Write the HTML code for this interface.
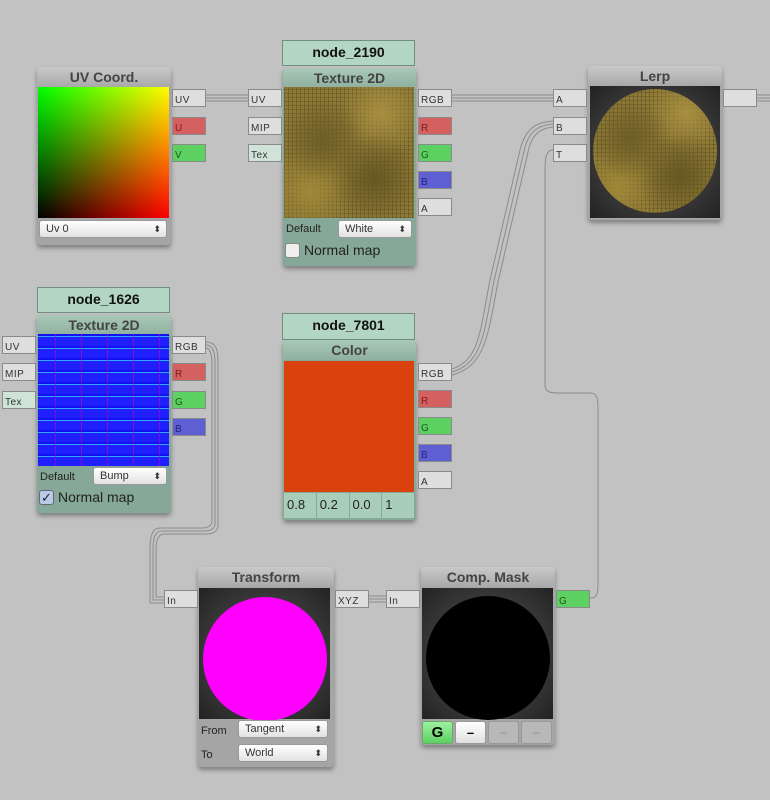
<!DOCTYPE html>
<html><head><meta charset="utf-8"><style>
*{margin:0;padding:0;box-sizing:border-box}
body{width:770px;height:800px;background:#c2c2c2;position:relative;overflow:hidden;font-family:"Liberation Sans",sans-serif}
.a{position:absolute}
.slot{position:absolute;width:34px;height:18px;border:1px solid #8a8a8a;background:#dedede;font-size:10px;color:#333;padding:5px 0 0 2px;line-height:11px;letter-spacing:0.5px}
.r{background:#d46060;color:#7a1d1d}.g{background:#5dd062;color:#1d5a1d}.b{background:#5f5fd4;color:#22227a}.t{background:#cfe3d8}
.node{position:absolute;border-radius:4px;box-shadow:0 3px 5px rgba(0,0,0,.35)}
.gray{background:#a5a5a5}.teal{background:#85a898}
.hdr{height:20px;text-align:center;font-size:14px;color:#444;font-weight:bold;line-height:20px;border-radius:4px 4px 0 0}
.gray .hdr{background:linear-gradient(#c9c9c9,#a9a9a9)}
.teal .hdr{background:linear-gradient(#a9c8b8,#8fb0a0)}
.lbl{position:absolute;background:#b3d6c4;border:1px solid #6f8f80;text-align:center;font-weight:bold;font-size:14px;color:#111;line-height:23px}
.dd{position:absolute;background:linear-gradient(#fff,#e2e2e2);border:1px solid #999;border-radius:3px;font-size:11px;color:#333;padding-left:6px;line-height:16px}
.dd:after{content:"⬍";position:absolute;right:5px;top:0;font-size:9px}
.sm{position:absolute;font-size:11px;color:#222}
.dark{background:radial-gradient(circle,#555 0%,#333 70%,#222 100%)}
.tex{background:radial-gradient(circle at 30% 40%,#6e5e26,transparent 35%),radial-gradient(circle at 70% 70%,#665622,transparent 35%),radial-gradient(circle at 75% 20%,#a88e40,transparent 30%),radial-gradient(circle at 20% 80%,#a08838,transparent 30%),repeating-linear-gradient(90deg,rgba(0,0,0,.18) 0 1px,transparent 1px 4px),repeating-linear-gradient(0deg,rgba(0,0,0,.15) 0 1px,transparent 1px 4px),#8e7a36}
</style></head><body>
<svg class="a" style="left:0;top:0" width="770" height="800" fill="none" stroke="#8c8c8c" stroke-width="1">
<g><path d="M206 95 H248"/><path d="M206 98 H248"/><path d="M206 101 H248"/></g>
<g><path d="M452 95 H553"/><path d="M452 98 H553"/><path d="M452 101 H553"/></g>
<g><path d="M757 95 H770"/><path d="M757 98 H770"/><path d="M757 101 H770"/></g>
<g><path d="M369 596 H386"/><path d="M369 599 H386"/><path d="M369 602 H386"/></g>
<g><path d="M452 369 C480 360 480 330 490 280 L520 150 C526 125 540 122 553 121"/><path d="M452 372 C483 363 484 332 494 281 L524 151 C529 128 542 125 553 124"/><path d="M452 375 C486 366 488 334 498 282 L528 152 C532 131 544 128 553 127"/></g>
<path d="M553 150 C545 150 545 160 545 175 L545 385 C545 393 552 393 560 393 L590 393 C598 393 598 400 598 410 L598 585 C598 598 594 598 590 598"/>
<g><path d="M206 342 C216 342 218 350 218 360 L218 525 C218 532 212 534 206 534 L164 534 C158 534 156 540 156 550 L156 597 H164"/><path d="M206 345 C213 345 215 352 215 362 L215 523 C215 529 210 531 204 531 L162 531 C155 531 153 538 153 550 L153 600 H164"/><path d="M206 348 C210 348 212 355 212 364 L212 520 C212 526 208 528 202 528 L160 528 C152 528 150 536 150 550 L150 603 H164"/></g>
</svg>

<!-- UV Coord -->
<div class="node gray" style="left:37px;top:67px;width:134px;height:178px">
<div class="hdr">UV Coord.</div>
<div class="a" style="left:1px;top:20px;width:131px;height:131px;background:linear-gradient(to right,#000,#f00)"></div>
<div class="a" style="left:1px;top:20px;width:131px;height:131px;background:linear-gradient(to bottom,#0f0,#000);mix-blend-mode:screen"></div>
<div class="dd" style="left:2px;top:153px;width:128px;height:18px">Uv 0</div>
</div>
<div class="slot" style="left:172px;top:89px">UV</div>
<div class="slot r" style="left:172px;top:117px">U</div>
<div class="slot g" style="left:172px;top:144px">V</div>

<!-- node_2190 -->
<div class="lbl" style="left:282px;top:40px;width:133px;height:26px">node_2190</div>
<div class="node teal" style="left:283px;top:68px;width:133px;height:198px">
<div class="hdr">Texture 2D</div>
<div class="a tex" style="left:1px;top:19px;width:130px;height:131px"></div>
<div class="sm" style="left:3px;top:155px">Default</div>
<div class="dd" style="left:55px;top:152px;width:74px;height:18px">White</div>
<div class="a" style="left:2px;top:175px;width:15px;height:15px;background:#eee;border:1px solid #888;border-radius:3px"></div>
<div class="sm" style="left:21px;top:174px;font-size:14px">Normal map</div>
</div>
<div class="slot" style="left:248px;top:89px">UV</div>
<div class="slot" style="left:248px;top:117px">MIP</div>
<div class="slot t" style="left:248px;top:144px">Tex</div>
<div class="slot" style="left:418px;top:89px">RGB</div>
<div class="slot r" style="left:418px;top:117px">R</div>
<div class="slot g" style="left:418px;top:144px">G</div>
<div class="slot b" style="left:418px;top:171px">B</div>
<div class="slot" style="left:418px;top:198px">A</div>

<!-- Lerp -->
<div class="node gray" style="left:588px;top:66px;width:134px;height:154px">
<div class="hdr">Lerp</div>
<div class="a dark" style="left:2px;top:20px;width:130px;height:132px"></div>
<div class="a tex" style="left:5px;top:23px;width:124px;height:124px;border-radius:50%"></div>
</div>
<div class="slot" style="left:553px;top:89px">A</div>
<div class="slot" style="left:553px;top:117px">B</div>
<div class="slot" style="left:553px;top:144px">T</div>
<div class="slot" style="left:723px;top:89px"></div>

<!-- node_1626 -->
<div class="lbl" style="left:37px;top:287px;width:133px;height:26px">node_1626</div>
<div class="node teal" style="left:37px;top:315px;width:134px;height:198px">
<div class="hdr">Texture 2D</div>
<div class="a" style="left:1px;top:19px;width:131px;height:132px;background:repeating-linear-gradient(0deg,#2020ff 0 9px,#30a8ff 9px 10px,#1010f0 10px 12px),#1a1aff"></div>
<div class="a" style="left:1px;top:19px;width:131px;height:132px;background:repeating-linear-gradient(90deg,transparent 0 17px,rgba(200,0,180,.6) 17px 18px,transparent 18px 26px)"></div>
<div class="sm" style="left:3px;top:156px">Default</div>
<div class="dd" style="left:56px;top:152px;width:74px;height:18px">Bump</div>
<div class="a" style="left:2px;top:175px;width:15px;height:15px;background:#b9c9e6;border:1px solid #667;border-radius:3px;font-size:13px;line-height:13px;text-align:center;color:#123">✓</div>
<div class="sm" style="left:21px;top:174px;font-size:14px">Normal map</div>
</div>
<div class="slot" style="left:2px;top:336px">UV</div>
<div class="slot" style="left:2px;top:363px">MIP</div>
<div class="slot t" style="left:2px;top:391px">Tex</div>
<div class="slot" style="left:172px;top:336px">RGB</div>
<div class="slot r" style="left:172px;top:363px">R</div>
<div class="slot g" style="left:172px;top:391px">G</div>
<div class="slot b" style="left:172px;top:418px">B</div>

<!-- node_7801 -->
<div class="lbl" style="left:282px;top:313px;width:133px;height:27px">node_7801</div>
<div class="node teal" style="left:283px;top:340px;width:133px;height:180px">
<div class="hdr">Color</div>
<div class="a" style="left:1px;top:21px;width:130px;height:131px;background:#d9420c"></div>
<div class="a" style="left:1px;top:153px;width:130px;height:25px;display:flex;gap:1px">
<div style="flex:1;background:#a8cdb9;font-size:13px;padding:4px 3px;color:#222">0.8</div>
<div style="flex:1;background:#a8cdb9;font-size:13px;padding:4px 3px;color:#222;overflow:hidden">0.2</div>
<div style="flex:1;background:#a8cdb9;font-size:13px;padding:4px 3px;color:#222;overflow:hidden">0.0</div>
<div style="flex:1;background:#a8cdb9;font-size:13px;padding:4px 3px;color:#222">1</div>
</div>
</div>
<div class="slot" style="left:418px;top:363px">RGB</div>
<div class="slot r" style="left:418px;top:390px">R</div>
<div class="slot g" style="left:418px;top:417px">G</div>
<div class="slot b" style="left:418px;top:444px">B</div>
<div class="slot" style="left:418px;top:471px">A</div>

<!-- Transform -->
<div class="node gray" style="left:198px;top:567px;width:136px;height:200px">
<div class="hdr">Transform</div>
<div class="a dark" style="left:1px;top:21px;width:131px;height:131px"></div>
<div class="a" style="left:5px;top:30px;width:124px;height:124px;border-radius:50%;background:#ff00ff"></div>
<div class="sm" style="left:3px;top:158px">From</div>
<div class="dd" style="left:40px;top:153px;width:90px;height:18px">Tangent</div>
<div class="sm" style="left:3px;top:182px">To</div>
<div class="dd" style="left:40px;top:177px;width:90px;height:18px">World</div>
</div>
<div class="slot" style="left:164px;top:590px">In</div>
<div class="slot" style="left:335px;top:590px">XYZ</div>

<!-- Comp Mask -->
<div class="node gray" style="left:421px;top:567px;width:134px;height:178px">
<div class="hdr">Comp. Mask</div>
<div class="a dark" style="left:1px;top:21px;width:131px;height:131px"></div>
<div class="a" style="left:5px;top:29px;width:124px;height:124px;border-radius:50%;background:#000"></div>
<div class="a" style="left:1px;top:154px;width:31px;height:23px;background:linear-gradient(#9ef0a0,#5dd062);border:1px solid #6a6;border-radius:3px;font-weight:bold;font-size:15px;text-align:center;line-height:21px">G</div>
<div class="a" style="left:34px;top:154px;width:31px;height:23px;background:linear-gradient(#fff,#e0e0e0);border:1px solid #999;border-radius:3px;font-weight:bold;text-align:center;line-height:21px;font-size:13px">–</div>
<div class="a" style="left:67px;top:154px;width:31px;height:23px;background:#b8b8b8;border:1px solid #999;border-radius:3px;text-align:center;line-height:21px;font-size:12px;color:#888">–</div>
<div class="a" style="left:100px;top:154px;width:31px;height:23px;background:#b8b8b8;border:1px solid #999;border-radius:3px;text-align:center;line-height:21px;font-size:12px;color:#888">–</div>
</div>
<div class="slot" style="left:386px;top:590px">In</div>
<div class="slot g" style="left:556px;top:590px">G</div>
</body></html>
